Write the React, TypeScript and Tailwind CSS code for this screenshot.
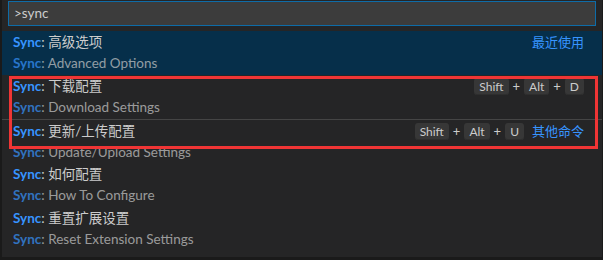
import React from "react";

const font = { fontFamily: 'Lato, "Noto Sans CJK SC", sans-serif' };

function Key({ k }: { k: string }) {
  return (
    <span className="inline-flex h-[17px] items-center rounded-[3px] bg-[#373737] px-[5px] text-[12px] leading-none text-[#cccccc] shadow-[inset_0_-1px_0_#2e2e2e]">
      {k}
    </span>
  );
}

function Keys({ keys }: { keys: string[] }) {
  return (
    <span className="flex items-center">
      {keys.map((k, i) => (
        <React.Fragment key={k}>
          {i > 0 && <span className="mx-[4px] text-[13px] text-[#cccccc]">+</span>}
          <Key k={k} />
        </React.Fragment>
      ))}
    </span>
  );
}

type Item = {
  zh: string;
  en: string;
  selected?: boolean;
  keys?: string[];
  tag?: string;
  sepTop?: boolean;
};

const items: Item[] = [
  { zh: "高级选项", en: "Advanced Options", selected: true, tag: "最近使用" },
  { zh: "下载配置", en: "Download Settings", keys: ["Shift", "Alt", "D"] },
  { zh: "更新/上传配置", en: "Update/Upload Settings", keys: ["Shift", "Alt", "U"], tag: "其他命令", sepTop: true },
  { zh: "如何配置", en: "How To Configure" },
  { zh: "重置扩展设置", en: "Reset Extension Settings" },
];

function Row({ it }: { it: Item }) {
  return (
    <div
      className={
        "flex h-[44px] flex-col pl-[11px] pr-[18px] " +
        (it.selected ? "bg-[#062f4a] " : "") +
        (it.sepTop ? "border-t border-[#454545] " : "")
      }
    >
      <div className="flex h-[23px] items-center text-[13.5px] text-[#cccccc]">
        <span className="flex-1 whitespace-nowrap">
          <span className="font-bold text-[#3794ff]">Sync</span>: {it.zh}
        </span>
        {it.keys && <Keys keys={it.keys} />}
        {it.tag && <span className="ml-[8px] text-[13px] text-[#3794ff]">{it.tag}</span>}
      </div>
      <div className="flex h-[19px] items-center text-[13.5px] text-[#cccccc] opacity-70">
        <span className="whitespace-nowrap">
          <span className="font-bold text-[#3794ff]">Sync</span>: {it.en}
        </span>
      </div>
    </div>
  );
}

export default function App() {
  return (
    <div className="h-[260px] w-[603px] bg-[#1a1a1a] pb-[3px] pl-[2px] pr-[1px]" style={font}>
      <div className="relative flex h-full flex-col bg-[#252526] pt-px">
        <div className="mx-[6px] flex h-[25px] items-center border border-[#0e6ca8] bg-[#3c3c3c] pl-[5px] text-[13.5px] text-[#cccccc]">
          &gt;sync
        </div>
        <div className="mt-[5px] flex flex-col">
          {items.map((it) => (
            <Row key={it.en} it={it} />
          ))}
        </div>
        <div className="pointer-events-none absolute left-[7px] top-[76px] h-[73px] w-[589px] border-[3px] border-[#f03535]" />
      </div>
    </div>
  );
}
